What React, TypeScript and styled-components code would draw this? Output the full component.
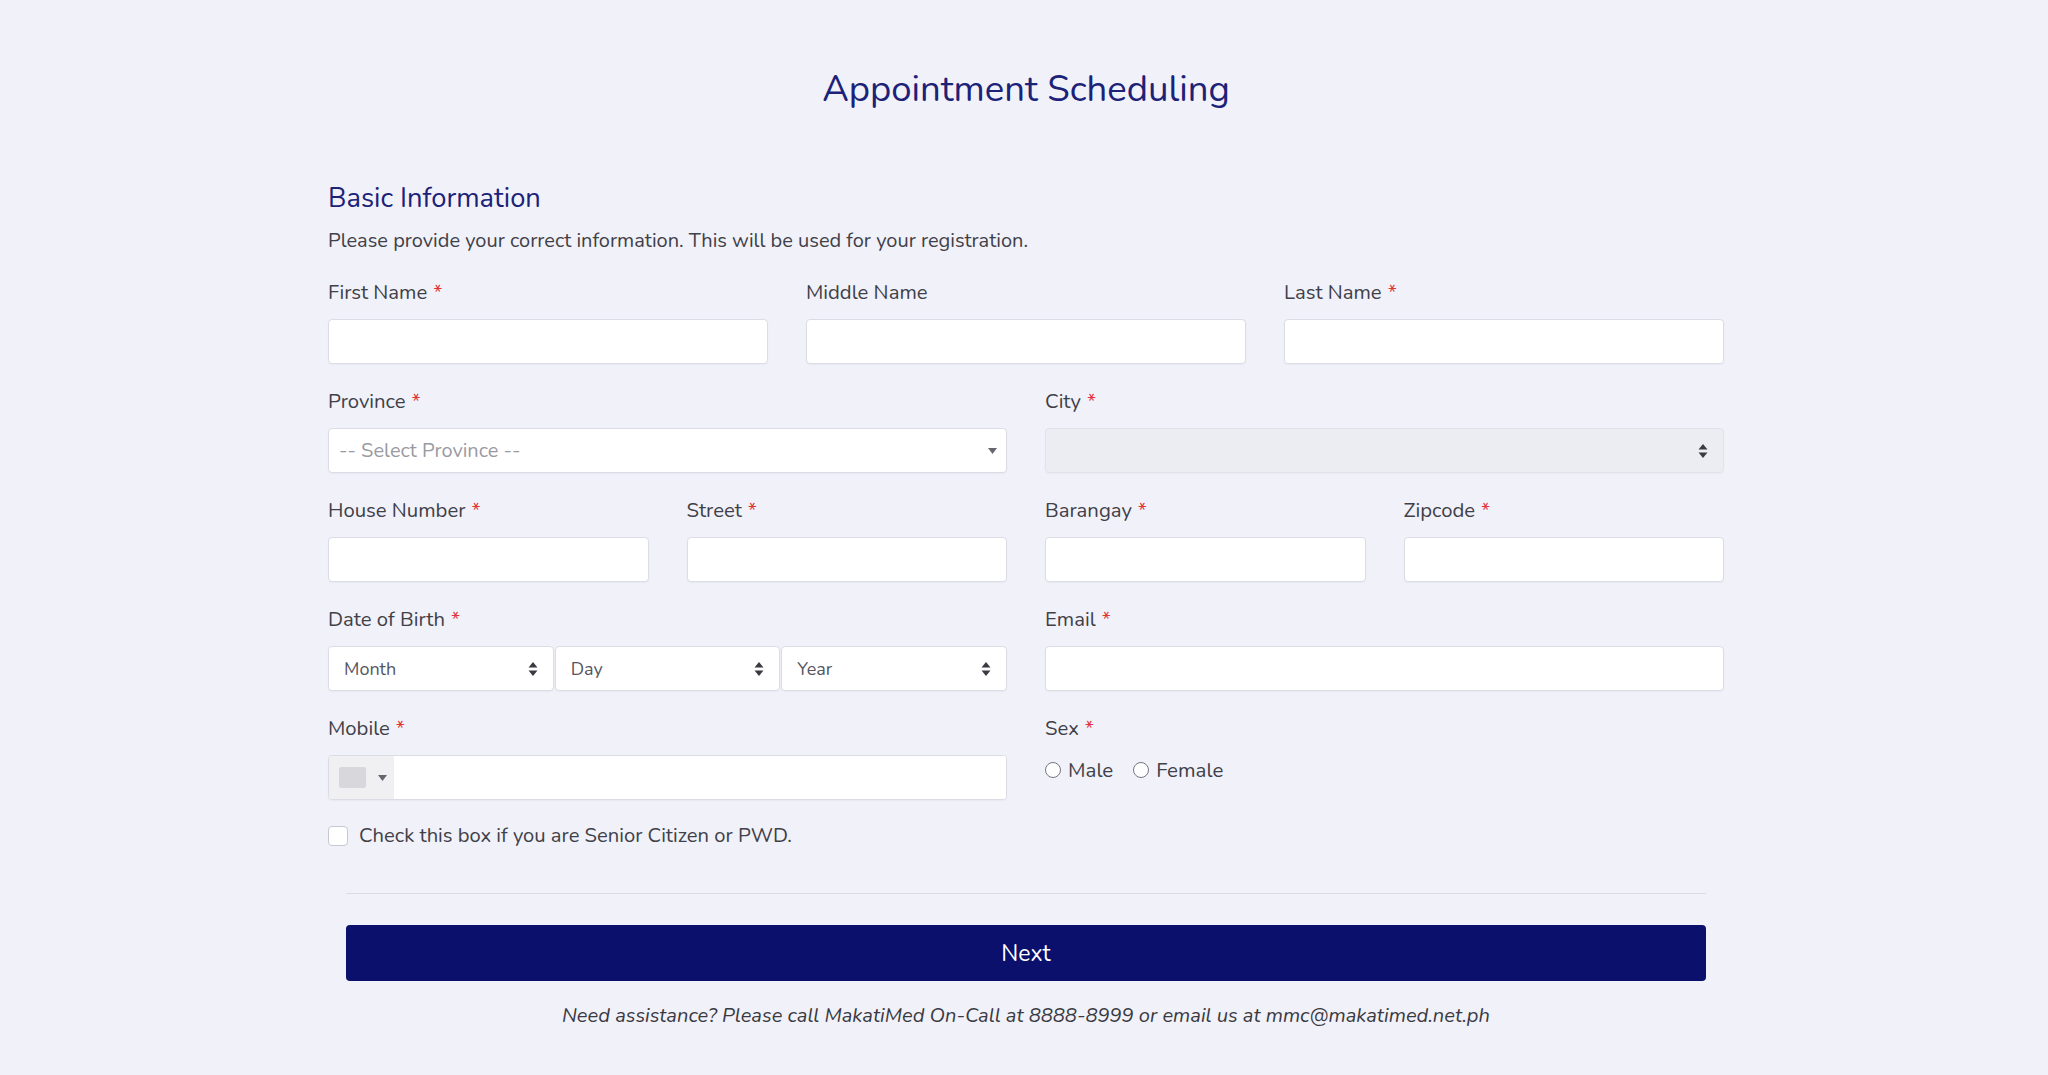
import React, { useState } from "react";
import styled, { createGlobalStyle } from "styled-components";

const GlobalStyle = createGlobalStyle`
  body {
    margin: 0;
    background-color: #f1f1f9;
    font-family: "Nunito", "Lato", "Noto Sans", sans-serif;
    color: #404048;
  }
  * {
    box-sizing: border-box;
  }
`;

const Page = styled.div`
  padding: 67px 0 40px;
`;

const Title = styled.h1`
  margin: 0;
  text-align: center;
  font-size: 36.5px;
  line-height: 44px;
  font-weight: 400;
  color: #1b2278;
  padding-left: 4px;
`;

const Container = styled.div`
  width: 1396px;
  margin: 71px 0 0 calc(50% - 696px);
`;

const SectionTitle = styled.h2`
  margin: 0;
  font-size: 27.3px;
  line-height: 32px;
  font-weight: 400;
  color: #1b2278;
`;

const Description = styled.p`
  margin: 14px 0 26px;
  font-size: 20px;
  line-height: 26px;
  color: #404048;
`;

const Form = styled.div`
  display: flex;
  flex-direction: column;
  gap: 25px;
`;

const Row = styled.div<{ $cols: number }>`
  display: grid;
  grid-template-columns: repeat(${(p) => p.$cols}, 1fr);
  column-gap: 38px;
`;

const Field = styled.div<{ $span?: number }>`
  grid-column: span ${(p) => p.$span ?? 1};
  display: flex;
  flex-direction: column;
`;

const Label = styled.label`
  font-size: 20.3px;
  line-height: 24px;
  margin-bottom: 15px;
  color: #404048;
`;

const Required = styled.span`
  color: #e2323a;
  margin-left: 6px;
`;

const Input = styled.input`
  height: 45px;
  width: 100%;
  border: 1px solid #dcdce6;
  border-radius: 4px;
  background: #fff;
  box-shadow: 0 1px 2px rgba(0, 0, 0, 0.04);
  padding: 0 14px;
  font-family: inherit;
  font-size: 18px;
  outline: none;
`;

const SelectWrap = styled.div`
  position: relative;
  flex: 1;
`;

const Select = styled.select<{ $disabled?: boolean; $small?: boolean }>`
  appearance: none;
  width: 100%;
  height: 45px;
  border: 1px solid #dcdce6;
  border-radius: 4px;
  background: ${(p) => (p.$disabled ? "#ebebf1" : "#fff")};
  box-shadow: 0 1px 2px rgba(0, 0, 0, 0.04);
  padding: 0 ${(p) => (p.$small ? "15px" : "10px")};
  font-family: inherit;
  font-size: ${(p) => (p.$small ? "18px" : "20px")};
  color: ${(p) => (p.$small ? "#555560" : "#9a9aa2")};
  outline: none;
`;

const SelectIcon = styled.span<{ $right: number }>`
  position: absolute;
  right: ${(p) => p.$right}px;
  top: 50%;
  transform: translateY(-50%);
  display: flex;
  pointer-events: none;
`;

const DobGroup = styled.div`
  display: flex;
  gap: 1px;
`;

const PhoneField = styled.div`
  display: flex;
  height: 45px;
  border: 1px solid #dcdce6;
  border-radius: 4px;
  background: #fff;
  overflow: hidden;
  box-shadow: 0 1px 2px rgba(0, 0, 0, 0.04);
`;

const FlagButton = styled.div`
  width: 65px;
  background: #f0f0f2;
  display: flex;
  align-items: center;
  padding-left: 10px;
  gap: 12px;
`;

const Flag = styled.span`
  width: 27px;
  height: 21px;
  background: #d8d8dc;
  border-radius: 2px;
`;

const PhoneInput = styled.input`
  flex: 1;
  border: none;
  outline: none;
  font-family: inherit;
  font-size: 18px;
  padding: 0 12px;
`;

const RadioGroup = styled.div`
  display: flex;
  align-items: center;
  gap: 20px;
  height: 30px;
`;

const RadioOption = styled.label`
  display: flex;
  align-items: center;
  gap: 7px;
  font-size: 20.5px;
  line-height: 30px;
  color: #404048;
  cursor: pointer;
`;

const RadioCircle = styled.span<{ $checked: boolean }>`
  width: 16px;
  height: 16px;
  border-radius: 50%;
  border: 1px solid #767680;
  box-shadow: ${(p) => (p.$checked ? "inset 0 0 0 3px #fff" : "none")};
  background-color: ${(p) => (p.$checked ? "#0a106b" : "#fff")};
`;

const CheckRow = styled.label`
  display: flex;
  align-items: center;
  gap: 11px;
  font-size: 20.2px;
  line-height: 22px;
  color: #404048;
  cursor: pointer;
`;

const CheckBox = styled.span`
  width: 20px;
  height: 20px;
  border: 1px solid #c8c8d0;
  border-radius: 4px;
  background: #fff;
`;

const Divider = styled.hr`
  margin: 46px 18px 31px;
  border: none;
  border-top: 1px solid #dcdce4;
`;

const NextButton = styled.button`
  display: block;
  width: calc(100% - 36px);
  margin: 0 18px;
  height: 56px;
  border: none;
  border-radius: 4px;
  background: #0a106b;
  color: #fff;
  font-family: inherit;
  font-size: 23px;
  cursor: pointer;
`;

const Footer = styled.p`
  margin: 21px 0 0;
  text-align: center;
  font-style: italic;
  font-size: 20.1px;
  line-height: 28px;
  color: #3a3a42;
`;

const UpDown = () => (
  <svg width="10" height="14" viewBox="0 0 10 14">
    <path d="M5 0 L9.5 5.5 H0.5 Z" fill="#3a3a42" />
    <path d="M5 14 L9.5 8.5 H0.5 Z" fill="#3a3a42" />
  </svg>
);

const Caret = () => (
  <svg width="9" height="6" viewBox="0 0 9 6">
    <path d="M0 0 H9 L4.5 6 Z" fill="#66666e" />
  </svg>
);

export default function App() {
  const [sex, setSex] = useState("");

  return (
    <>
      <GlobalStyle />
      <Page>
        <Title>Appointment Scheduling</Title>
        <Container>
          <SectionTitle>Basic Information</SectionTitle>
          <Description>
            Please provide your correct information. This will be used for your registration.
          </Description>
          <Form>
            <Row $cols={3}>
              <Field>
                <Label>
                  First Name<Required>*</Required>
                </Label>
                <Input />
              </Field>
              <Field>
                <Label>Middle Name</Label>
                <Input />
              </Field>
              <Field>
                <Label>
                  Last Name<Required>*</Required>
                </Label>
                <Input />
              </Field>
            </Row>
            <Row $cols={2}>
              <Field>
                <Label>
                  Province<Required>*</Required>
                </Label>
                <SelectWrap>
                  <Select defaultValue="">
                    <option value="">-- Select Province --</option>
                  </Select>
                  <SelectIcon $right={10}>
                    <Caret />
                  </SelectIcon>
                </SelectWrap>
              </Field>
              <Field>
                <Label>
                  City<Required>*</Required>
                </Label>
                <SelectWrap>
                  <Select $disabled disabled defaultValue="">
                    <option value=""></option>
                  </Select>
                  <SelectIcon $right={16}>
                    <UpDown />
                  </SelectIcon>
                </SelectWrap>
              </Field>
            </Row>
            <Row $cols={4}>
              <Field>
                <Label>
                  House Number<Required>*</Required>
                </Label>
                <Input />
              </Field>
              <Field>
                <Label>
                  Street<Required>*</Required>
                </Label>
                <Input />
              </Field>
              <Field>
                <Label>
                  Barangay<Required>*</Required>
                </Label>
                <Input />
              </Field>
              <Field>
                <Label>
                  Zipcode<Required>*</Required>
                </Label>
                <Input />
              </Field>
            </Row>
            <Row $cols={2}>
              <Field>
                <Label>
                  Date of Birth<Required>*</Required>
                </Label>
                <DobGroup>
                  {["Month", "Day", "Year"].map((part) => (
                    <SelectWrap key={part}>
                      <Select $small defaultValue="">
                        <option value="">{part}</option>
                      </Select>
                      <SelectIcon $right={16}>
                        <UpDown />
                      </SelectIcon>
                    </SelectWrap>
                  ))}
                </DobGroup>
              </Field>
              <Field>
                <Label>
                  Email<Required>*</Required>
                </Label>
                <Input type="email" />
              </Field>
            </Row>
            <Row $cols={2}>
              <Field>
                <Label>
                  Mobile<Required>*</Required>
                </Label>
                <PhoneField>
                  <FlagButton>
                    <Flag />
                    <Caret />
                  </FlagButton>
                  <PhoneInput type="tel" />
                </PhoneField>
              </Field>
              <Field>
                <Label>
                  Sex<Required>*</Required>
                </Label>
                <RadioGroup>
                  {["Male", "Female"].map((option) => (
                    <RadioOption key={option} onClick={() => setSex(option)}>
                      <RadioCircle $checked={sex === option} />
                      {option}
                    </RadioOption>
                  ))}
                </RadioGroup>
              </Field>
            </Row>
            <CheckRow>
              <CheckBox />
              Check this box if you are Senior Citizen or PWD.
            </CheckRow>
          </Form>
          <Divider />
          <NextButton>Next</NextButton>
          <Footer>
            Need assistance? Please call MakatiMed On-Call at 8888-8999 or email us at mmc@makatimed.net.ph
          </Footer>
        </Container>
      </Page>
    </>
  );
}
